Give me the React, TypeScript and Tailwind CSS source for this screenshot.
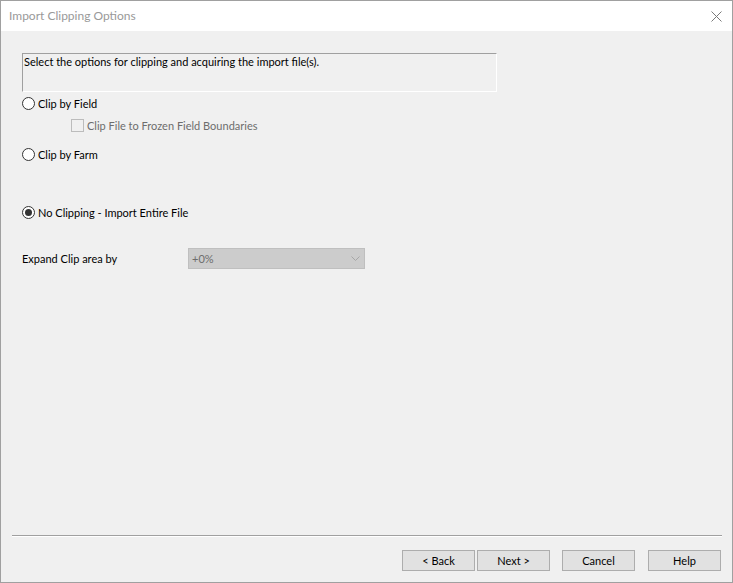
import { ReactNode } from 'react';

const font = { fontFamily: 'Lato, "Noto Sans", sans-serif' };

function Radio({ checked = false, label }: { checked?: boolean; label: string }) {
  return (
    <div className="flex h-[17px] items-center">
      <span className="flex h-[13px] w-[13px] items-center justify-center rounded-full border border-[#333333] bg-white">
        {checked ? <span className="h-[7px] w-[7px] rounded-full bg-[#333333]" /> : null}
      </span>
      <span className="ml-[3px] pt-[2px] text-[11px] text-black">{label}</span>
    </div>
  );
}

function Button({ children, className = '' }: { children: ReactNode; className?: string }) {
  return (
    <button className={`h-[21px] w-[73px] border border-[#adadad] bg-[#e1e1e1] pt-[1px] text-[11px] text-black ${className}`}>
      {children}
    </button>
  );
}

export default function App() {
  return (
    <div
      className="flex h-[583px] w-[733px] flex-col border border-[#a0a0a0] bg-[#f0f0f0]"
      style={font}
    >
      <div className="flex h-[30px] items-center justify-between bg-white pl-2 pr-[10px]">
        <span className="text-[12px] text-[#999999]">Import Clipping Options</span>
        <svg width="11" height="11" viewBox="0 0 11 11" className="text-[#7a7a7a]">
          <path d="M0.5 0.5 L10.5 10.5 M10.5 0.5 L0.5 10.5" stroke="currentColor" strokeWidth="1" />
        </svg>
      </div>

      <div className="flex flex-1 flex-col pl-[21px]">
        <div className="mt-[22px] h-[39px] w-[475px] border-b border-l border-r border-t border-b-white border-l-[#a0a0a0] border-r-white border-t-[#a0a0a0] pl-[1px] pt-[1px]">
          <p className="text-[11px] leading-[14px] text-black">
            Select the options for clipping and acquiring the import file(s).
          </p>
        </div>

        <div className="mt-[3px]">
          <Radio label="Clip by Field" />
        </div>
        <div className="mt-[5px] flex h-[17px] items-center pl-[49px]">
          <span className="h-[13px] w-[13px] border border-[#bcbcbc] bg-[#f0f0f0]" />
          <span className="ml-[3px] pt-[2px] text-[11px] text-[#6d6d6d]">Clip File to Frozen Field Boundaries</span>
        </div>
        <div className="mt-[12px]">
          <Radio label="Clip by Farm" />
        </div>
        <div className="mt-[41px]">
          <Radio checked label="No Clipping - Import Entire File" />
        </div>

        <div className="mt-[27px] flex items-center">
          <span className="w-[166px] pt-[2px] text-[11px] text-black">Expand Clip area by</span>
          <div className="flex h-[21px] w-[177px] items-center justify-between border border-[#bfbfbf] bg-[#cccccc] pl-[3px] pr-[4px]">
            <span className="pt-[1px] text-[11px] text-[#6d6d6d]">+0%</span>
            <svg width="9" height="5" viewBox="0 0 9 5">
              <path d="M0.5 0.5 L4.5 4.5 L8.5 0.5" fill="none" stroke="#a6a6a6" strokeWidth="1" />
            </svg>
          </div>
        </div>

        <div className="flex-1" />
      </div>

      <div className="ml-[11px] mr-[10px] border-b border-t border-b-white border-t-[#a0a0a0]" />

      <div className="mb-[11px] mr-[11px] mt-[13px] flex justify-end">
        <Button>&lt; Back</Button>
        <Button className="ml-[2px]">Next &gt;</Button>
        <Button className="ml-[12px]">Cancel</Button>
        <Button className="ml-[13px]">Help</Button>
      </div>
    </div>
  );
}
